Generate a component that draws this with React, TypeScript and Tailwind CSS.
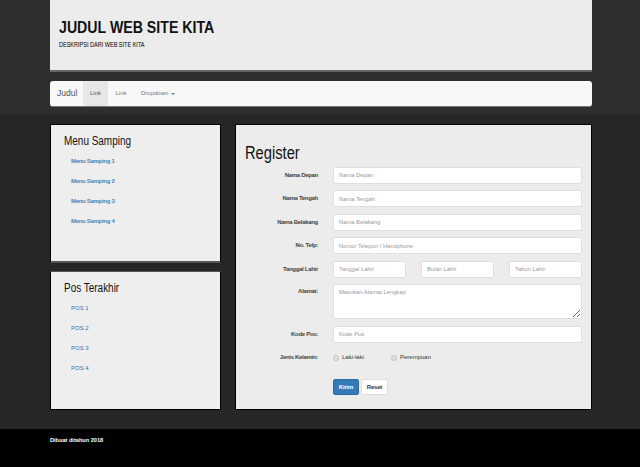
const inputClass =
    'h-[17px] min-w-0 rounded-[2px] border border-[#dfdfdf] bg-white px-[5px] text-[5.8px] text-[#555555] placeholder:text-[#999999] outline-none';

const labelClass = 'w-[73px] shrink-0 text-right text-[6px] font-bold tracking-[-0.3px] text-[#444444]';

function Field({ label, placeholder }: { label: string; placeholder: string }) {
    return (
        <div className="flex items-center gap-[15px]">
            <label className={labelClass}>{label}</label>
            <input className={`${inputClass} flex-1`} placeholder={placeholder} />
        </div>
    );
}

function SideCard({ title, items, className, linkClass }: { title: string; items: string[]; className: string; linkClass: string }) {
    return (
        <section className={`h-[139px] border border-black bg-[#eeeeee] pl-[13px] ${className}`}>
            <h3 className="mt-[8px] origin-left scale-x-[.83] text-[12px] leading-[16px] text-[#111111]">{title}</h3>
            <ul className="mt-[7px] flex flex-col gap-[10px] pl-[7px]">
                {items.map((item) => (
                    <li key={item}>
                        <a href="#" className={`block text-[6px] leading-[10px] ${linkClass}`}>
                            {item}
                        </a>
                    </li>
                ))}
            </ul>
        </section>
    );
}

function Radio({ label }: { label: string }) {
    return (
        <label className="flex items-center gap-[3px] text-[6px] text-[#333333]">
            <span className="size-[6px] rounded-full border border-[#c4c4c4] bg-[#e0e0e0]" />
            {label}
        </label>
    );
}

export default function App() {
    return (
        <div className="flex h-[467px] w-[640px] flex-col overflow-hidden bg-[#262626] font-['Liberation_Sans',Arial,sans-serif]">
            <header className="h-[115px] shrink-0 bg-[#2e2e2e]">
                <div className="mx-[50px] h-[72px] w-[542px] border-b-2 border-[#666666] bg-[#ececec] pl-[9px]">
                    <h1 className="origin-left scale-x-[.885] pt-[18px] text-[16px] leading-[20px] font-bold text-[#111111]">JUDUL WEB SITE KITA</h1>
                    <p className="mt-[3px] origin-left scale-x-[.85] text-[6.5px] leading-[8px] text-black">DESKRIPSI DARI WEB SITE KITA</p>
                </div>

                <nav className="mx-[50px] mt-[9px] flex h-[26px] w-[542px] items-stretch rounded-[3px] border-b border-[#777777] bg-[#f8f8f8] pl-[7px] text-[6px] text-[#777777]">
                    <a href="#" className="flex w-[26px] items-center text-[8.5px] text-[#555555]">
                        Judul
                    </a>
                    <a href="#" className="flex w-[25px] items-center justify-center bg-[#e7e7e7] text-[#555555]">
                        Link
                    </a>
                    <a href="#" className="flex w-[26px] items-center justify-center">
                        Link
                    </a>
                    <a href="#" className="ml-[7px] flex items-center gap-[3px]">
                        Dropdown
                        <span className="border-x-[2px] border-t-[2px] border-x-transparent border-t-[#777777]" />
                    </a>
                </nav>
            </header>

            <main className="flex h-[314px] shrink-0 gap-[14px] pt-[9px] pr-[48px] pl-[50px]">
                <aside className="flex w-[171px] shrink-0 flex-col gap-[8px]">
                    <SideCard
                        className="border-b-2 border-b-[#555555]"
                        linkClass="font-bold tracking-[-0.3px] text-[#4a84bd]"
                        title="Menu Samping"
                        items={['Menu Samping 1', 'Menu Samping 2', 'Menu Samping 3', 'Menu Samping 4']}
                    />
                    <SideCard
                        className="border-t-[#555555]"
                        linkClass="text-[#2a6fb0]"
                        title="Pos Terakhir"
                        items={['POS 1', 'POS 2', 'POS 3', 'POS 4']}
                    />
                </aside>

                <section className="h-[286px] flex-1 border border-black bg-[#ececec] px-[9px]">
                    <h2 className="mt-[19px] origin-left scale-x-[.84] text-[17.5px] leading-[19px] text-[#111111]">Register</h2>
                    <form className="mt-[3.5px] flex flex-col gap-[6.5px]">
                        <Field label="Nama Depan" placeholder="Nama Depan" />
                        <Field label="Nama Tengah" placeholder="Nama Tengah" />
                        <Field label="Nama Belakang" placeholder="Nama Belakang" />
                        <Field label="No. Telp:" placeholder="Nomor Telepon / Handphone" />
                        <div className="flex items-center gap-[15px]">
                            <label className={labelClass}>Tanggal Lahir</label>
                            <div className="flex flex-1 justify-between">
                                <input className={`${inputClass} w-[73px]`} placeholder="Tanggal Lahir" />
                                <input className={`${inputClass} w-[73px]`} placeholder="Bulan Lahir" />
                                <input className={`${inputClass} w-[73px]`} placeholder="Tahun Lahir" />
                            </div>
                        </div>
                        <div className="flex items-start gap-[15px]">
                            <label className={`${labelClass} pt-[3px]`}>Alamat:</label>
                            <textarea
                                className={`${inputClass} h-[35px] py-[3px] leading-[8px] flex-1`}
                                placeholder="Masukan Alamat Lengkap"
                            />
                        </div>
                        <Field label="Kode Pos:" placeholder="Kode Pos" />
                        <div className="mt-[1.5px] flex h-[14px] items-center gap-[15px]">
                            <label className={labelClass}>Jenis Kelamin:</label>
                            <div className="flex gap-[27px]">
                                <Radio label="Laki-laki" />
                                <Radio label="Perempuan" />
                            </div>
                        </div>
                        <div className="mt-[8px] flex gap-[2px] pl-[88px]">
                            <button type="button" className="h-[16px] w-[26px] rounded-[2px] border border-[#2e6da4] bg-[#337ab7] text-[6px] font-bold tracking-[-0.2px] text-white">
                                Kirim
                            </button>
                            <button type="button" className="h-[16px] w-[27px] rounded-[2px] border border-[#dfdfdf] bg-white text-[6px] font-bold tracking-[-0.2px] text-[#333333]">
                                Reset
                            </button>
                        </div>
                    </form>
                </section>
            </main>

            <footer className="flex-1 bg-black pt-[7px] pl-[50px]">
                <p className="text-[5.6px] leading-[9px] font-bold text-white">Dibuat ditahun 2018</p>
            </footer>
        </div>
    );
}
